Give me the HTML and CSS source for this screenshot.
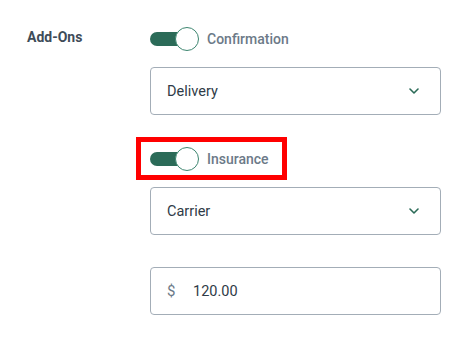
FILE: index.html
```html
<!DOCTYPE html>
<html>
<head>
<meta charset="utf-8">
<link rel="stylesheet" href="styles.css">
</head>
<body>
<div class="form">
  <div class="label">Add-Ons</div>
  <div class="controls">
    <div class="group">
      <div class="toggle-row">
        <span class="switch"><span class="track"></span><span class="knob"></span></span>
        <span class="toggle-text">Confirmation</span>
      </div>
      <div class="field select">
        <span class="value">Delivery</span>
        <svg class="chev" width="10" height="6" viewBox="0 0 10 6"><path d="M1 1l4 4 4-4" fill="none" stroke="#2b6b58" stroke-width="1.6" stroke-linecap="round" stroke-linejoin="round"/></svg>
      </div>
    </div>
    <div class="group">
      <div class="toggle-row highlighted">
        <span class="switch"><span class="track"></span><span class="knob"></span></span>
        <span class="toggle-text">Insurance</span>
        <span class="highlight"></span>
      </div>
      <div class="field select">
        <span class="value">Carrier</span>
        <svg class="chev" width="10" height="6" viewBox="0 0 10 6"><path d="M1 1l4 4 4-4" fill="none" stroke="#2b6b58" stroke-width="1.6" stroke-linecap="round" stroke-linejoin="round"/></svg>
      </div>
    </div>
    <div class="field price">
      <span class="currency">$</span>
      <span class="value">120.00</span>
    </div>
  </div>
</div>
</body>
</html>
```
FILE: styles.css
```css
* { box-sizing: border-box; }
html, body { margin: 0; padding: 0; background: #ffffff; }
body { font-family: Roboto, "Liberation Sans", sans-serif; }
.form {
  display: flex;
  padding: 27px 0 0 27px;
}
.label {
  width: 123px;
  font-size: 14px;
  font-weight: 700;
  color: #3e4c59;
  line-height: 20px;
  padding-top: 0;
}
.controls {
  width: 291px;
  display: flex;
  flex-direction: column;
  gap: 32px;
}
.group {
  display: flex;
  flex-direction: column;
  gap: 16px;
}
.toggle-row {
  position: relative;
  display: flex;
  align-items: center;
  height: 24px;
  gap: 8px;
}
.switch {
  position: relative;
  width: 49px;
  height: 24px;
  flex: none;
}
.track {
  position: absolute;
  left: 0;
  top: 5px;
  width: 46px;
  height: 14px;
  border-radius: 7px;
  background: #2b6b58;
}
.knob {
  position: absolute;
  left: 25px;
  top: 0;
  width: 24px;
  height: 24px;
  border-radius: 50%;
  background: #ffffff;
  border: 1px solid #3d8670;
}
.toggle-text {
  font-size: 14px;
  font-weight: 500;
  color: #6c7a88;
}
.highlight {
  position: absolute;
  left: -14px;
  top: -10px;
  width: 151px;
  height: 43px;
  border: 5px solid #ff0000;
}
.field {
  height: 48px;
  border: 1px solid #a3adb7;
  border-radius: 4px;
  display: flex;
  align-items: center;
  padding: 0 21px 0 16px;
  font-size: 14.5px;
  color: #2f3b47;
}
.select { justify-content: space-between; }
.chev { display: block; }
.currency {
  color: #6c7a88;
  font-size: 15px;
  width: 26px;
}
```
